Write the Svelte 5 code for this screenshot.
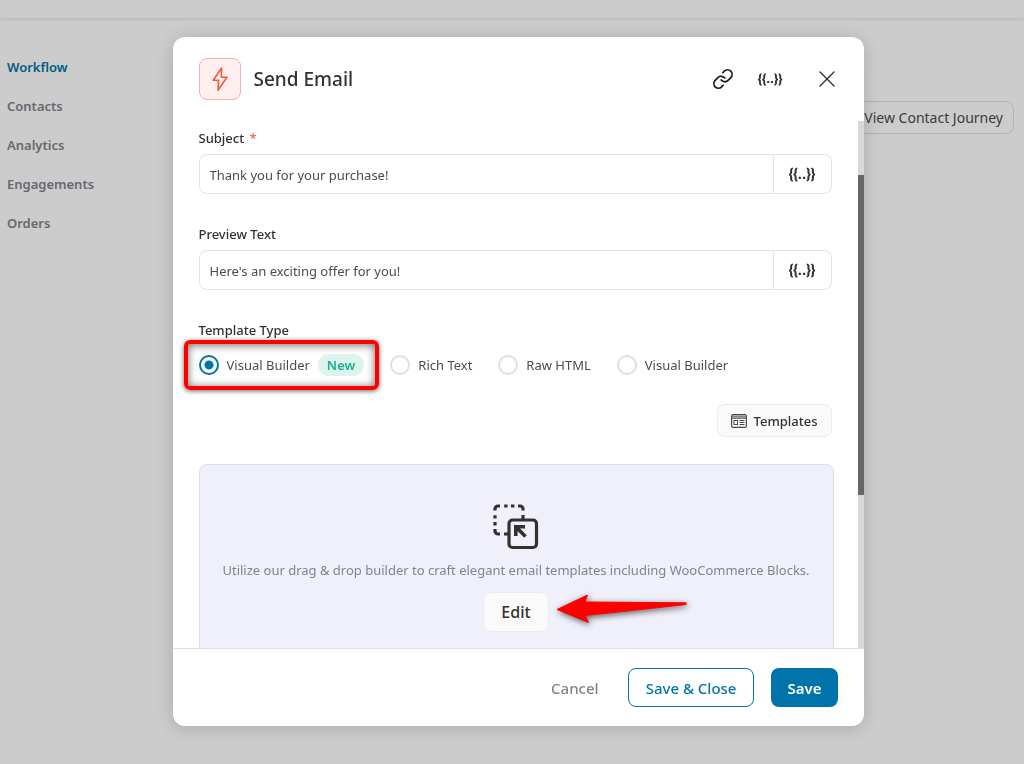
<script lang="ts">
  const navItems = ["Workflow", "Contacts", "Analytics", "Engagements", "Orders"];

  const templateTypes = [
    { value: "builder", label: "Visual Builder", isNew: true },
    { value: "rich", label: "Rich Text", isNew: false },
    { value: "raw", label: "Raw HTML", isNew: false },
    { value: "classic", label: "Visual Builder", isNew: false },
  ];

  let activeNav = $state("Workflow");
  let subject = $state("Thank you for your purchase!");
  let previewText = $state("Here's an exciting offer for you!");
  let templateType = $state("builder");
</script>

<div class="page">
  <header class="topbar"></header>
  <div class="layout">
    <nav class="sidebar">
      {#each navItems as item}
        <a
          href="#{item.toLowerCase()}"
          class:active={activeNav === item}
          onclick={() => (activeNav = item)}>{item}</a
        >
      {/each}
    </nav>
    <main class="content">
      <button class="journey" type="button">View Contact Journey</button>
    </main>
  </div>
</div>

<div class="overlay">
  <div class="modal" role="dialog" aria-labelledby="modal-title">
    <header class="modal-header">
      <span class="action-icon">
        <svg width="18" height="26" viewBox="0 0 18 26" fill="none" stroke="#ee5a3a" stroke-width="1.6" stroke-linejoin="round">
          <path d="M10.6 2 2.2 14.2h5.3L7 24.2 15.9 11.2h-5.6z" />
        </svg>
      </span>
      <h1 id="modal-title">Send Email</h1>
      <div class="header-tools">
        <button class="tool" type="button" aria-label="Link">
          <svg width="24" height="24" viewBox="0 0 24 24" fill="none" stroke="#1d1d1d" stroke-width="1.9" stroke-linecap="round" stroke-linejoin="round">
            <path d="M10 13a5 5 0 0 0 7.54.54l3-3a5 5 0 0 0-7.07-7.07l-1.72 1.71" />
            <path d="M14 11a5 5 0 0 0-7.54-.54l-3 3a5 5 0 0 0 7.07 7.07l1.71-1.71" />
          </svg>
        </button>
        <button class="tool merge" type="button">{"{{..}}"}</button>
        <button class="tool close" type="button" aria-label="Close">
          <svg width="16" height="16" viewBox="0 0 16 16" stroke="#353030" stroke-width="1.4" stroke-linecap="round">
            <path d="M1 1l14 14M15 1 1 15" />
          </svg>
        </button>
      </div>
    </header>

    <div class="modal-body">
      <form class="form" id="email-form">
        <div class="field">
          <label for="subject">Subject <span class="required">*</span></label>
          <div class="input-group">
            <input id="subject" type="text" bind:value={subject} />
            <button class="merge" type="button">{"{{..}}"}</button>
          </div>
        </div>

        <div class="field">
          <label for="preview">Preview Text</label>
          <div class="input-group">
            <input id="preview" type="text" bind:value={previewText} />
            <button class="merge" type="button">{"{{..}}"}</button>
          </div>
        </div>

        <fieldset>
          <legend>Template Type</legend>
          <div class="options">
            {#each templateTypes as type}
              <label class="option" class:highlight={type.isNew}>
                <input type="radio" name="template" value={type.value} bind:group={templateType} />
                {type.label}
                {#if type.isNew}
                  <span class="badge">New</span>
                {/if}
              </label>
            {/each}
          </div>
        </fieldset>

        <button class="templates" type="button">
          <svg width="16" height="14" viewBox="0 0 16 14" fill="none" stroke="#4a4646">
            <rect x="0.6" y="0.6" width="14.8" height="12.8" rx="1.6" stroke-width="1.2" />
            <path d="M1 2.5h14" stroke="#8a8686" stroke-width="2" />
            <path d="M1 4.2h14" />
            <rect x="3" y="6.5" width="3.5" height="4" />
            <path d="M8.5 6.5h5M8.5 8.5h5M8.5 10.5h5" />
          </svg>
          Templates
        </button>

        <section class="builder">
          <svg width="46" height="46" viewBox="0 0 46 46" fill="none" stroke="#353030" stroke-width="3.2">
            <path d="M2 6.5V5a3 3 0 0 1 3-3h2M25 2h2a3 3 0 0 1 3 3v1.5M2 25v2a3 3 0 0 0 3 3h2" />
            <path d="M11.2 2h3.4M18 2h3.4M2 11.2v3.4M2 18v3.4M30 11v4M11 30h4" />
            <rect x="16" y="16" width="27.5" height="27.5" rx="3.5" />
            <path d="M22.8 32V22.8H32M23.5 23.5l9 9" stroke-width="3.6" />
          </svg>
          <p>Utilize our drag &amp; drop builder to craft elegant email templates including WooCommerce Blocks.</p>
          <div class="edit-wrap">
            <button class="edit" type="button">Edit</button>
            <svg class="arrow" width="144" height="44" viewBox="0 0 144 44">
              <path d="M4 19.5 34.5 5l-2.5 7 101 .8v1.8L32 25.5l3.5 7z" fill="#fe0000" stroke="#fe0000" />
            </svg>
          </div>
        </section>
      </form>
      <div class="scrollbar"><span class="thumb"></span></div>
    </div>

    <footer class="modal-footer">
      <button class="cancel" type="button">Cancel</button>
      <button class="outline" type="button">Save &amp; Close</button>
      <button class="primary" type="submit" form="email-form">Save</button>
    </footer>
  </div>
</div>

<style>
  :global(body) {
    background: #fff;
    color: #353030;
    font-family: "Noto Sans", "Open Sans", sans-serif;
    font-size: 13px;
    line-height: 20px;
  }

  button,
  input {
    box-sizing: border-box;
    margin: 0;
    font: inherit;
    color: inherit;
  }

  button {
    background: none;
    border: none;
    padding: 0;
    cursor: pointer;
    white-space: nowrap;
  }

  svg {
    display: block;
    flex-shrink: 0;
  }

  .topbar {
    height: 18px;
    box-shadow: 0 1px 4px rgba(0, 0, 0, 0.12);
  }

  .layout {
    display: flex;
    justify-content: space-between;
  }

  .sidebar {
    display: flex;
    flex-direction: column;
    gap: 19px;
    padding: 39px 7px;
  }

  .sidebar a {
    color: #82838e;
    font-weight: 600;
    text-decoration: none;
  }

  .sidebar a.active {
    color: #0073aa;
  }

  .content {
    padding: 83px 10px;
  }

  .journey {
    height: 33px;
    padding: 0 10px 0 40px;
    border: 1px solid #dedfea;
    border-radius: 8px;
    color: #4f4b4b;
    font-size: 14px;
  }

  .overlay {
    position: fixed;
    inset: 0;
    box-sizing: border-box;
    display: flex;
    align-items: center;
    justify-content: center;
    padding: 37px 0 38px 12px;
    background: rgba(0, 0, 0, 0.2);
  }

  .modal {
    display: flex;
    flex-direction: column;
    width: 68%;
    min-width: 691px;
    max-height: 100%;
    background: #fff;
    border-radius: 12px;
    box-shadow: 0 2px 20px rgba(0, 0, 0, 0.18);
    overflow: hidden;
  }

  .modal-header {
    display: flex;
    align-items: center;
    flex-shrink: 0;
    gap: 13px;
    padding: 21px 29px 21px 26px;
  }

  .action-icon {
    display: flex;
    align-items: center;
    justify-content: center;
    width: 40px;
    height: 40px;
    background: #ffefef;
    border: 1px solid #e3b9ba;
    border-radius: 8px;
  }

  h1 {
    flex: 1;
    margin: 0;
    font-size: 19px;
    font-weight: 500;
    line-height: 24px;
  }

  .header-tools {
    display: flex;
    align-items: center;
  }

  .tool svg {
    width: 22px;
    height: 22px;
  }

  .tool.close svg {
    width: 16px;
    height: 16px;
  }

  .merge {
    font-family: Roboto, sans-serif;
    font-size: 14px;
    font-weight: 900;
  }

  .tool.merge {
    margin: 0 36px 0 24px;
    font-size: 13px;
  }

  .modal-body {
    display: flex;
    min-height: 0;
  }

  .form {
    flex: 1;
    display: flex;
    flex-direction: column;
    padding: 7px 24px 24px 26px;
    overflow: hidden;
  }

  .field {
    display: flex;
    flex-direction: column;
    gap: 6px;
    margin: 0 2px 30px 0;
  }

  .field > label,
  legend {
    font-weight: 500;
  }

  .required {
    margin-left: 2px;
    color: #ee5a3a;
  }

  .input-group {
    display: flex;
    height: 40px;
  }

  .input-group input {
    flex: 1;
    min-width: 0;
    padding: 2px 10px 0;
    background: #fff;
    border: 1px solid #e2e2ee;
    border-radius: 8px 0 0 8px;
    outline: none;
    color: #4f4b4b;
  }

  .input-group .merge {
    width: 58px;
    border: 1px solid #e2e2ee;
    border-left: none;
    border-radius: 0 8px 8px 0;
  }

  fieldset {
    min-width: 0;
    margin: 0;
    padding: 0;
    border: none;
  }

  legend {
    padding: 0;
  }

  .options {
    display: flex;
    gap: 26px;
    padding-top: 14px;
  }

  .option {
    position: relative;
    display: flex;
    align-items: center;
    gap: 8px;
    height: 22px;
    color: #4f4b4b;
    white-space: nowrap;
  }

  .option input {
    appearance: none;
    width: 20px;
    height: 20px;
    background: #fff;
    border: 2px solid #dedfea;
    border-radius: 50%;
  }

  .option input:checked {
    border-color: #0073aa;
    background: radial-gradient(circle, #0073aa 4px, #fff 5px);
  }

  .badge {
    padding: 1px 9px;
    background: #dcf3ee;
    border-radius: 11px;
    color: #1daf94;
    font-weight: 600;
  }

  .option.highlight::after {
    content: "";
    position: absolute;
    inset: -14px -15px;
    border: 4px solid #fe0000;
    border-radius: 6px;
    box-shadow:
      0 1px 5px rgba(0, 0, 0, 0.6),
      inset 0 1px 8px rgba(0, 0, 0, 0.6);
    pointer-events: none;
  }

  .templates {
    display: flex;
    align-items: center;
    align-self: flex-end;
    flex-shrink: 0;
    gap: 7px;
    height: 33px;
    margin: 28px 2px 27px 0;
    padding: 0 13px;
    background: #fafafa;
    border: 1px solid #ebebeb;
    border-radius: 8px;
    font-weight: 500;
  }

  .builder {
    display: flex;
    flex-direction: column;
    align-items: center;
    padding: 39px 10px 40px;
    background: #f0f0fa;
    border: 1px solid #dedfea;
    border-radius: 8px;
  }

  .builder p {
    margin: 10px 0 12px;
    color: #82838e;
    white-space: nowrap;
  }

  .edit-wrap {
    position: relative;
  }

  .edit {
    width: 66px;
    height: 40px;
    background: #fafafa;
    border: 1px solid #ebebeb;
    border-radius: 8px;
    font-size: 16px;
    font-weight: 500;
  }

  .arrow {
    position: absolute;
    top: -2px;
    left: 70px;
    filter: drop-shadow(1px 2px 3px rgba(0, 0, 0, 0.6));
  }

  .scrollbar {
    display: grid;
    grid-template-rows: 54fr 320fr 153fr;
    width: 6px;
    background: #d9d9d9;
  }

  .thumb {
    grid-row: 2;
    background: #666;
  }

  .modal-footer {
    display: flex;
    align-items: center;
    justify-content: flex-end;
    flex-shrink: 0;
    gap: 17px;
    padding: 19px 26px;
    border-top: 1px solid #dedfea;
    font-size: 15px;
    font-weight: 500;
  }

  .modal-footer button {
    height: 39px;
    padding: 0 17px;
    border-radius: 8px;
  }

  .modal-footer .cancel {
    padding: 0 12px;
    color: #82838e;
  }

  .modal-footer .outline {
    border: 1px solid #0073aa;
    color: #0073aa;
  }

  .modal-footer .primary {
    padding: 0 16px;
    background: #0073aa;
    color: #fff;
    font-weight: 600;
  }
</style>
